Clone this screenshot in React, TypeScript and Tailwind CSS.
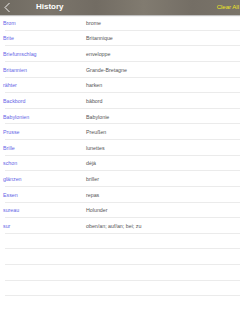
import React from "react";

const rows: [string, string][] = [
  ["Brom", "brome"],
  ["Brite", "Britannique"],
  ["Briefumschlag", "enveloppe"],
  ["Britannien", "Grande-Bretagne"],
  ["rähter", "harken"],
  ["Backbord", "bâbord"],
  ["Babylonien", "Babylonie"],
  ["Prusse", "Preußen"],
  ["Brille", "lunettes"],
  ["schon", "déjà"],
  ["glänzen", "briller"],
  ["Essen", "repas"],
  ["sureau", "Holunder"],
  ["sur", "oben/an; auf/an; bei; zu"],
  ["", ""],
  ["", ""],
  ["", ""],
  ["", ""],
  ["", ""],
];

export default function App() {
  return (
    <div
      className="w-[240px] h-[310px] overflow-hidden bg-white"
      style={{ fontFamily: '"Liberation Sans", Arial, sans-serif' }}
    >
      <div className="relative h-[15px] flex items-center bg-[linear-gradient(90deg,#6f6a61_0%,#7b756b_20%,#726c63_40%,#817b70_60%,#746e65_80%,#7a7469_100%)] shadow-[0_1px_1px_rgba(0,0,0,0.25)]">
        <svg
          className="absolute left-[4px] top-[2px]"
          width="7"
          height="11"
          viewBox="0 0 7 11"
        >
          <path d="M5.5 1 L1 5.5 L5.5 10" stroke="#ffffff" strokeWidth="0.9" fill="none" />
        </svg>
        <span className="absolute left-[36px] top-[2px] text-[8px] leading-[10px] font-bold text-white">
          History
        </span>
        <span className="absolute right-[1px] top-[4px] text-[6px] leading-[7px] text-[#f0e620]">
          Clear All
        </span>
      </div>
      <div className="flex flex-col">
        {rows.map(([a, b], i) => (
          <div key={i} className="relative h-[15.625px] flex items-center text-[5.3px] leading-[6px]">
            <span className="w-[86px] shrink-0 pl-[3px] text-[#6464e6]">{a}</span>
            <span className="text-[#555555]">{b}</span>
            <div className="absolute left-[5px] right-0 bottom-0 h-px bg-[#ebebeb]" />
          </div>
        ))}
      </div>
    </div>
  );
}
